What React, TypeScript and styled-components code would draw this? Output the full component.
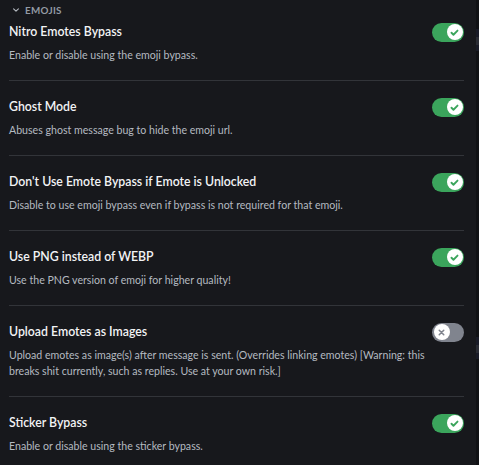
import styled, { createGlobalStyle } from "styled-components";

const GlobalStyle = createGlobalStyle`
    html, body {
        margin: 0;
        padding: 0;
        background: #17181c;
    }
    body {
        font-family: Lato, "Noto Sans", sans-serif;
        -webkit-font-smoothing: antialiased;
    }
`;

type Setting = {
    title: string;
    description: string;
    enabled: boolean;
};

const settings: Setting[] = [
    { title: "Nitro Emotes Bypass", description: "Enable or disable using the emoji bypass.", enabled: true },
    { title: "Ghost Mode", description: "Abuses ghost message bug to hide the emoji url.", enabled: true },
    {
        title: "Don't Use Emote Bypass if Emote is Unlocked",
        description: "Disable to use emoji bypass even if bypass is not required for that emoji.",
        enabled: true,
    },
    { title: "Use PNG instead of WEBP", description: "Use the PNG version of emoji for higher quality!", enabled: true },
    {
        title: "Upload Emotes as Images",
        description:
            "Upload emotes as image(s) after message is sent. (Overrides linking emotes) [Warning: this breaks shit currently, such as replies. Use at your own risk.]",
        enabled: false,
    },
    { title: "Sticker Bypass", description: "Enable or disable using the sticker bypass.", enabled: true },
];

const Toggle = ({ on }: { on: boolean }) => (
    <Switch $on={on}>
        <Knob>
            {on ? (
                <svg width="11" height="11" viewBox="0 0 20 20">
                    <path d="M4.5 10.5l3.6 3.6L15.5 6.5" fill="none" stroke="#3ba55c" strokeWidth="3.4" strokeLinecap="round" strokeLinejoin="round" />
                </svg>
            ) : (
                <svg width="9" height="9" viewBox="0 0 20 20">
                    <path d="M5 5l10 10M15 5L5 15" fill="none" stroke="#80848e" strokeWidth="3.4" strokeLinecap="round" />
                </svg>
            )}
        </Knob>
    </Switch>
);

const App = () => {
    return (
        <Page>
            <GlobalStyle />
            <Content>
                <SectionHeader>
                    <svg width="8" height="8" viewBox="0 0 10 10">
                        <path d="M2 3.5l3 3 3-3" fill="none" stroke="#b5bac1" strokeWidth="1.4" strokeLinecap="round" strokeLinejoin="round" />
                    </svg>
                    <span>Emojis</span>
                </SectionHeader>
                {settings.map((s) => (
                    <Row key={s.title}>
                        <TitleLine>
                            <Title>{s.title}</Title>
                            <Toggle on={s.enabled} />
                        </TitleLine>
                        <Description>{s.description}</Description>
                    </Row>
                ))}
            </Content>
            <SideStrip>
                <StripMark $top={29} />
                <StripMark $top={337} />
            </SideStrip>
        </Page>
    );
};

export default App;

const Page = styled.div`
    display: flex;
    width: 479px;
    height: 465px;
    overflow: hidden;
    background: #17181c;
`;

const Content = styled.div`
    flex: 1;
    padding: 0 12px 0 9px;
`;

const SideStrip = styled.div`
    position: relative;
    width: 3px;
    background: #101114;
`;

const StripMark = styled.div<{ $top: number }>`
    position: absolute;
    top: ${(p) => p.$top}px;
    left: 0;
    width: 3px;
    height: 22px;
    background: #191b27;

    &::after {
        content: "";
        position: absolute;
        top: 8px;
        left: 0;
        width: 3px;
        height: 8px;
        background: #2a2c34;
    }
`;

const SectionHeader = styled.div`
    display: flex;
    align-items: center;
    gap: 5px;
    height: 20px;
    padding-left: 3px;
    color: #949ba4;
    font-size: 9.8px;
    font-weight: 700;
    letter-spacing: 0.3px;
    text-transform: uppercase;
`;

const Row = styled.div`
    padding: 16px 0 17px;
    border-bottom: 1px solid #323439;

    ${SectionHeader} + & {
        padding-top: 2px;
    }
`;

const TitleLine = styled.div`
    display: flex;
    align-items: center;
    justify-content: space-between;
    height: 20px;
`;

const Title = styled.div`
    color: #f2f3f5;
    font-size: 12.3px;
    font-weight: 600;
    line-height: 20px;
`;

const Switch = styled.div<{ $on: boolean }>`
    display: flex;
    align-items: center;
    justify-content: ${(p) => (p.$on ? "flex-end" : "flex-start")};
    width: 32px;
    height: 19px;
    padding: 0 1.5px;
    box-sizing: border-box;
    border-radius: 10px;
    background: ${(p) => (p.$on ? "#3ba55c" : "#80848e")};
`;

const Knob = styled.div`
    display: flex;
    align-items: center;
    justify-content: center;
    width: 16px;
    height: 16px;
    border-radius: 50%;
    background: #ffffff;
`;

const Description = styled.div`
    margin-top: 5px;
    padding-right: 16px;
    color: #b5bac1;
    font-size: 10.6px;
    line-height: 16px;
`;
